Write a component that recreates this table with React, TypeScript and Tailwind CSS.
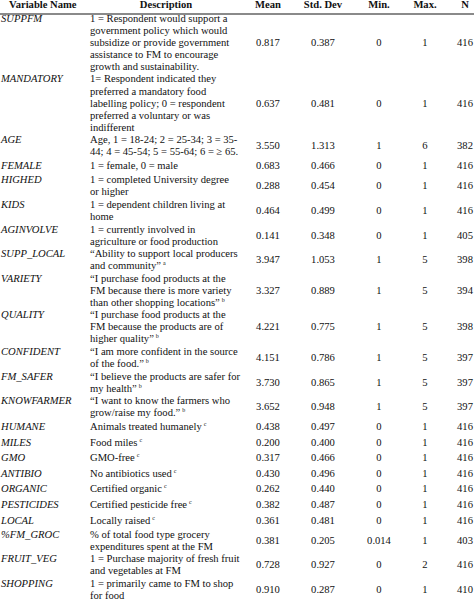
import React from "react";

type Row = {
  name: string;
  desc: string[];
  sup?: string;
  vals: [string, string, string, string, string];
};

const rows: Row[] = [
  { name: "SUPPFM", desc: ["1 = Respondent would support a", "government policy which would", "subsidize or provide government", "assistance to FM to encourage", "growth and sustainability."], vals: ["0.817", "0.387", "0", "1", "416"] },
  { name: "MANDATORY", desc: ["1= Respondent indicated they", "preferred a mandatory food", "labelling policy; 0 = respondent", "preferred a voluntary or was", "indifferent"], vals: ["0.637", "0.481", "0", "1", "416"] },
  { name: "AGE", desc: ["Age, 1 = 18-24; 2 = 25-34; 3 = 35-", "44; 4 = 45-54; 5 = 55-64; 6 = \u2265 65."], vals: ["3.550", "1.313", "1", "6", "382"] },
  { name: "FEMALE", desc: ["1 = female, 0 = male"], vals: ["0.683", "0.466", "0", "1", "416"] },
  { name: "HIGHED", desc: ["1 = completed University degree", "or higher"], vals: ["0.288", "0.454", "0", "1", "416"] },
  { name: "KIDS", desc: ["1 = dependent children living at", "home"], vals: ["0.464", "0.499", "0", "1", "416"] },
  { name: "AGINVOLVE", desc: ["1 = currently involved in", "agriculture or food production"], vals: ["0.141", "0.348", "0", "1", "405"] },
  { name: "SUPP_LOCAL", desc: ["\u201CAbility to support local producers", "and community\u201D"], sup: "a", vals: ["3.947", "1.053", "1", "5", "398"] },
  { name: "VARIETY", desc: ["\u201CI purchase food products at the", "FM because there is more variety", "than other shopping locations\u201D"], sup: "b", vals: ["3.327", "0.889", "1", "5", "394"] },
  { name: "QUALITY", desc: ["\u201CI purchase food products at the", "FM because the products are of", "higher quality\u201D"], sup: "b", vals: ["4.221", "0.775", "1", "5", "398"] },
  { name: "CONFIDENT", desc: ["\u201CI am more confident in the source", "of the food.\u201D"], sup: "b", vals: ["4.151", "0.786", "1", "5", "397"] },
  { name: "FM_SAFER", desc: ["\u201CI believe the products are safer for", "my health\u201D"], sup: "b", vals: ["3.730", "0.865", "1", "5", "397"] },
  { name: "KNOWFARMER", desc: ["\u201CI want to know the farmers who", "grow/raise my food.\u201D"], sup: "b", vals: ["3.652", "0.948", "1", "5", "397"] },
  { name: "HUMANE", desc: ["Animals treated humanely"], sup: "c", vals: ["0.438", "0.497", "0", "1", "416"] },
  { name: "MILES", desc: ["Food miles"], sup: "c", vals: ["0.200", "0.400", "0", "1", "416"] },
  { name: "GMO", desc: ["GMO-free"], sup: "c", vals: ["0.317", "0.466", "0", "1", "416"] },
  { name: "ANTIBIO", desc: ["No antibiotics used"], sup: "c", vals: ["0.430", "0.496", "0", "1", "416"] },
  { name: "ORGANIC", desc: ["Certified organic"], sup: "c", vals: ["0.262", "0.440", "0", "1", "416"] },
  { name: "PESTICIDES", desc: ["Certified pesticide free"], sup: "c", vals: ["0.382", "0.487", "0", "1", "416"] },
  { name: "LOCAL", desc: ["Locally raised"], sup: "c", vals: ["0.361", "0.481", "0", "1", "416"] },
  { name: "%FM_GROC", desc: ["% of total food type grocery", "expenditures spent at the FM"], vals: ["0.381", "0.205", "0.014", "1", "403"] },
  { name: "FRUIT_VEG", desc: ["1 = Purchase majority of fresh fruit", "and vegetables at FM"], vals: ["0.728", "0.927", "0", "2", "416"] },
  { name: "SHOPPING", desc: ["1 = primarily came to FM to shop", "for food"], vals: ["0.910", "0.287", "0", "1", "410"] },
];

const cols = "grid grid-cols-[90px_150px_56px_54px_58px_34px_46px]";

export default function App() {
  return (
    <div
      className="w-[474px] h-[606px] overflow-hidden bg-white text-[#111111] text-[10.6px]"
      style={{ fontFamily: '"Liberation Serif", "Times New Roman", serif' }}
    >
      <div className="w-[488px]">
        <div className={`${cols} h-[13px] leading-[10px] font-bold`}>
          <div className="pl-[9px] whitespace-nowrap">Variable Name</div>
          <div className="text-center pl-[2px]">Description</div>
          <div className="text-center">Mean</div>
          <div className="text-center">Std. Dev</div>
          <div className="text-center">Min.</div>
          <div className="text-center">Max.</div>
          <div className="text-center">N</div>
        </div>
        <div className="h-[2px] bg-[#8a8a8a]" />
        <div className="-mt-[2.5px]">
          {rows.map((r) => {
            const single = r.desc.length === 1;
            return (
              <div
                key={r.name}
                className={`${cols} leading-[12.05px] ${single ? "py-[1.75px]" : "py-[0.25px]"}`}
              >
                <div className="italic pl-[1px] whitespace-nowrap">{r.name}</div>
                <div className="whitespace-nowrap">
                  {r.desc.map((l, i) => (
                    <div key={i}>
                      {l}
                      {r.sup && i === r.desc.length - 1 ? (
                        <span className="relative -top-[4px] ml-[2px] text-[6px] leading-none">{r.sup}</span>
                      ) : null}
                    </div>
                  ))}
                </div>
                {r.vals.map((v, i) => (
                  <div key={i} className="self-center text-center">
                    {v}
                  </div>
                ))}
              </div>
            );
          })}
        </div>
      </div>
    </div>
  );
}
